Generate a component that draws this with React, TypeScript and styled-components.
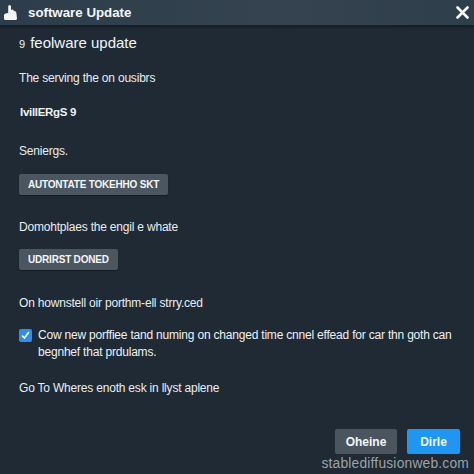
import React from "react";
import styled, { createGlobalStyle } from "styled-components";

const Global = createGlobalStyle`
  html, body { margin: 0; padding: 0; background: #1f2a35; }
  body { font-family: "Liberation Sans", Arial, sans-serif; color: #eef2f5; }
  * { box-sizing: border-box; }
`;

const Window = styled.div`
  width: 474px;
  height: 474px;
  display: flex;
  flex-direction: column;
  background: #1f2a35;
  position: relative;
  overflow: hidden;
`;

const TitleBar = styled.div`
  height: 26px;
  display: flex;
  align-items: center;
  padding: 0 5px 0 4px;
  background: linear-gradient(90deg, #2e3d4b 0%, #34434f 60%, #2f3e4b 100%);
  border-bottom: 1px solid #18212a;
  box-shadow: 0 1px 2px rgba(0,0,0,0.4);
`;

const TitleText = styled.span`
  font-weight: 700;
  font-size: 13.3px;
  margin-left: 11px;
  color: #f4f6f8;
  flex: 1;
`;

const Body = styled.div`
  flex: 1;
  display: flex;
  flex-direction: column;
  padding: 8px 14px 0 19px;
`;

const Heading = styled.div`
  font-size: 15px;
  color: #f2f5f8;
  display: flex;
  align-items: baseline;
  gap: 5px;
`;

const Small = styled.span`
  font-size: 11px;
`;

const Para = styled.p<{ $mt: number }>`
  margin: ${(p) => p.$mt}px 0 0 0;
  font-size: 12px;
  letter-spacing: -0.2px;
  line-height: 16px;
  color: #e9edf1;
`;

const Tag = styled.div`
  margin-top: 20px;
  font-size: 11.5px;
  font-weight: 700;
  letter-spacing: -0.3px;
  color: #f0f3f6;
  padding-left: 1px;
`;

const ActionButton = styled.button<{ $mt: number }>`
  align-self: flex-start;
  margin-top: ${(p) => p.$mt}px;
  height: 21px;
  padding: 0 9px;
  border: none;
  border-radius: 2px;
  background: #4b5660;
  color: #f3f5f7;
  font-family: "Liberation Sans", Arial, sans-serif;
  font-weight: 700;
  font-size: 10px;
  letter-spacing: -0.2px;
  box-shadow: 0 1px 1px rgba(0,0,0,0.35);
`;

const CheckRow = styled.div`
  margin-top: 16px;
  display: flex;
  gap: 6px;
  align-items: flex-start;
`;

const Check = styled.span`
  flex: none;
  width: 13px;
  height: 13px;
  margin-top: 2px;
  border-radius: 2px;
  background: #2f8ff0;
  display: flex;
  align-items: center;
  justify-content: center;
`;

const CheckText = styled.span`
  font-size: 12px;
  letter-spacing: -0.2px;
  line-height: 17px;
  color: #eef1f4;
`;

const Footer = styled.div`
  margin-top: auto;
  display: flex;
  justify-content: flex-end;
  gap: 10px;
  padding: 0 0 20px 0;
`;

const FootButton = styled.button<{ $primary?: boolean }>`
  height: 25px;
  padding: 0 10px;
  min-width: ${(p) => (p.$primary ? 53 : 62)}px;
  border: none;
  border-radius: 2px;
  background: ${(p) => (p.$primary ? "#1e96f2" : "#4b5560")};
  color: #f5f7f9;
  font-family: "Liberation Sans", Arial, sans-serif;
  font-weight: 700;
  font-size: 12px;
`;

const Watermark = styled.div`
  position: absolute;
  right: 5px;
  bottom: 3px;
  font-size: 13.8px;
  color: rgba(200, 205, 210, 0.75);
  letter-spacing: 0.2px;
`;

export default function App() {
  return (
    <>
      <Global />
      <Window>
        <TitleBar>
          <svg width="13" height="15" viewBox="0 0 13 15">
            <path
              d="M4.2 1.5 Q4.2 0 5.6 0 Q7 0 7 1.5 L7 5.2 Q7.5 4.4 8.6 4.6 Q9.8 4.9 9.8 6.2 Q10.4 5.8 11.3 6.2 Q12.4 6.8 12.4 8.2 L13 13.5 Q13 15 11.5 15 L1.5 15 Q0 15 0 13.5 L0 10.5 Q0 9 1.4 8.6 L4.2 8 Z"
              fill="#f4f6f8"
            />
          </svg>
          <TitleText>software Update</TitleText>
          <svg width="13" height="13" viewBox="0 0 13 13">
            <path d="M1.5 1.5 L11.5 11.5 M11.5 1.5 L1.5 11.5" stroke="#f6f8fa" strokeWidth="2.6" strokeLinecap="round" />
          </svg>
        </TitleBar>
        <Body>
          <Heading>
            <Small>9</Small>
            <span>feolware update</span>
          </Heading>
          <Para $mt={19}>The serving the on ousibrs</Para>
          <Tag>IvillERgS 9</Tag>
          <Para $mt={25}>Seniergs.</Para>
          <ActionButton $mt={15}>AUTONTATE TOKEHHO SKT</ActionButton>
          <Para $mt={24}>Domohtplaes the engil e whate</Para>
          <ActionButton $mt={14}>UDRIRST DONED</ActionButton>
          <Para $mt={25}>On hownstell oir porthm-ell strry.ced</Para>
          <CheckRow>
            <Check>
              <svg width="9" height="9" viewBox="0 0 9 9">
                <path d="M1.5 5 L3.5 7 L7.5 1.5" stroke="#fff" strokeWidth="1.6" fill="none" strokeLinecap="round" />
              </svg>
            </Check>
            <CheckText>
              Cow new porffiee tand numing on changed time cnnel effead for car thn goth can begnhef that prdulams.
            </CheckText>
          </CheckRow>
          <Para $mt={19}>Go To Wheres enoth esk in llyst aplene</Para>
          <Footer>
            <FootButton>Oheine</FootButton>
            <FootButton $primary>Dirle</FootButton>
          </Footer>
        </Body>
        <Watermark>stablediffusionweb.com</Watermark>
      </Window>
    </>
  );
}
